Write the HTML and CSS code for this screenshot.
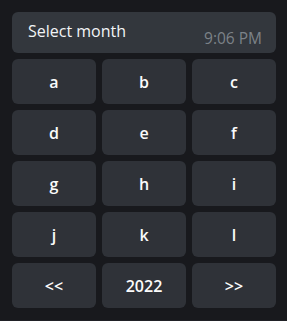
FILE: index.html
```html
<!DOCTYPE html>
<html>
<head>
    <meta charset="UTF-8">
    <title>Select month</title>
    <link rel="stylesheet" href="styles.css">
</head>
<body>
<div class="picker">
    <!--标题-->
    <div class="picker-head">
        <span class="title">Select month</span>
        <span class="time">9:06 PM</span>
    </div>
    <!--月份按钮-->
    <div class="grid">
        <div class="btn">a</div>
        <div class="btn">b</div>
        <div class="btn">c</div>
        <div class="btn">d</div>
        <div class="btn">e</div>
        <div class="btn">f</div>
        <div class="btn">g</div>
        <div class="btn">h</div>
        <div class="btn">i</div>
        <div class="btn">j</div>
        <div class="btn">k</div>
        <div class="btn">l</div>
        <div class="btn">&lt;&lt;</div>
        <div class="btn">2022</div>
        <div class="btn">&gt;&gt;</div>
    </div>
</div>
</body>
</html>
```

FILE: styles.css
```css
* {
    padding: 0;
    margin: 0;
    box-sizing: border-box;
}

html,
body {
    height: 100%;
}

body {
    background-color: #18191d;
    border-bottom: 1px solid #202126;
    font-family: "Open Sans", "Noto Sans", sans-serif;
    color: #fff;
}

.picker {
    padding: 12px 11px 0 12px;
}

.picker-head {
    height: 41px;
    background-color: #33373d;
    border-radius: 6px;
    display: flex;
    justify-content: space-between;
    padding: 0 14px 0 16px;
    margin-bottom: 6px;
}

.picker-head .title {
    font-size: 16px;
    line-height: 16px;
    margin-top: 11px;
    color: #f2f4f6;
}

.picker-head .time {
    font-size: 15.5px;
    line-height: 16px;
    margin-top: 18px;
    color: #7c8288;
}

.grid {
    display: grid;
    grid-template-columns: repeat(3, 84px);
    grid-auto-rows: 45px;
    gap: 6px;
}

.btn {
    background-color: #2f3238;
    border-radius: 6px;
    display: flex;
    align-items: center;
    justify-content: center;
    font-size: 16px;
    font-weight: 600;
    color: #fbfbfb;
}
```
